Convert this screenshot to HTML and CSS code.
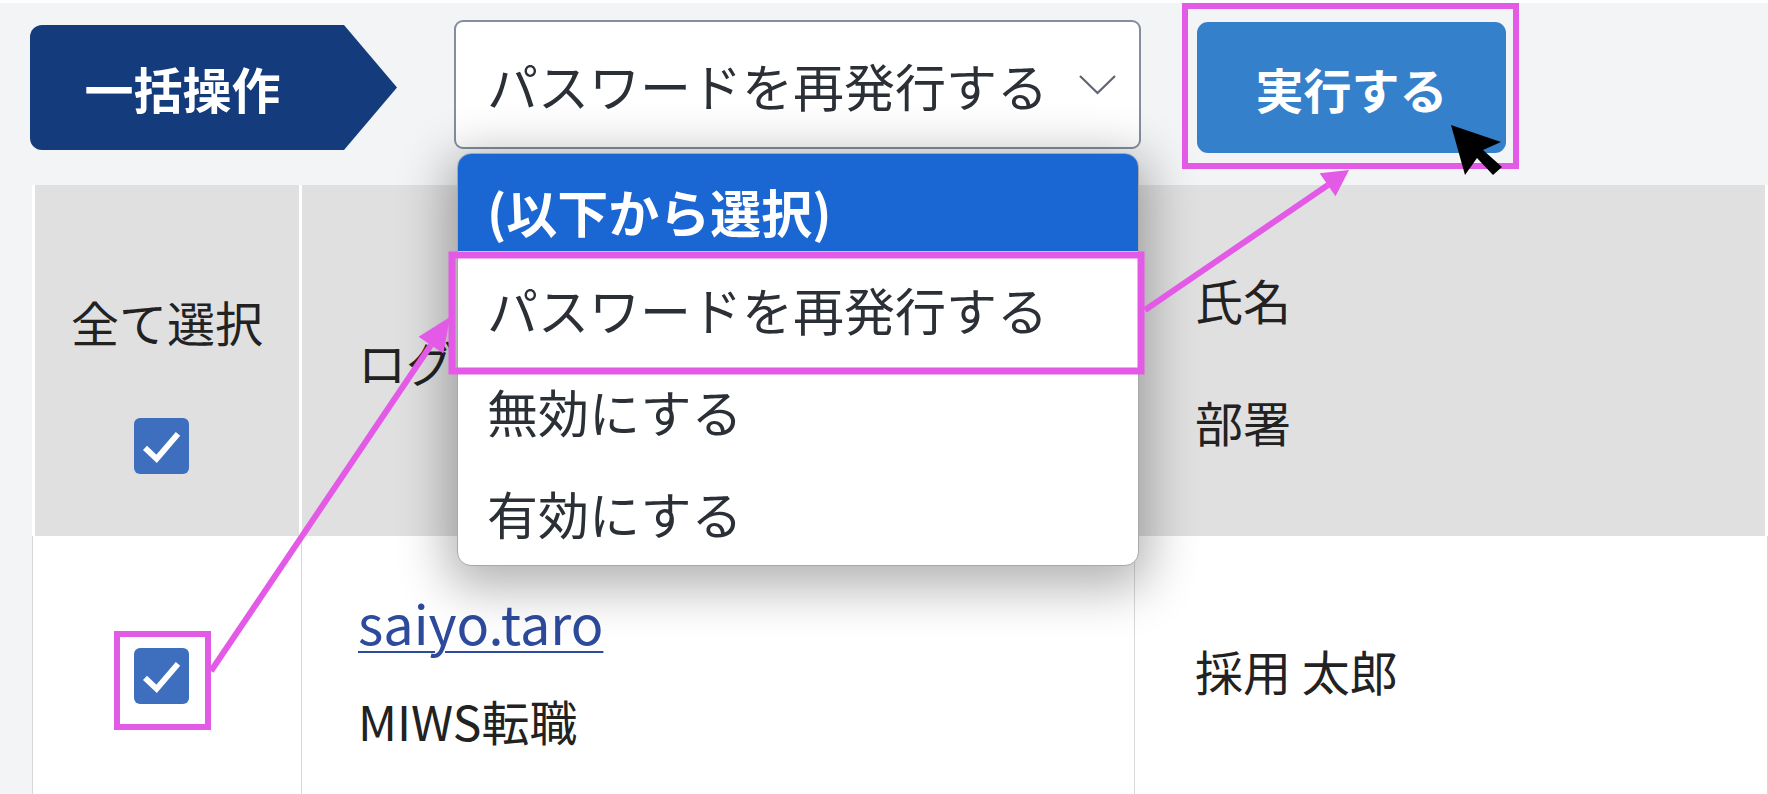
FILE: index.html
```html
<!DOCTYPE html>
<html lang="ja">
<head>
    <meta charset="UTF-8">
    <meta name="viewport" content="width=device-width, initial-scale=1.0">
    <title>ユーザー一括操作</title>
    <link rel="stylesheet" href="styles.css">
</head>
<body>

    <div class="toolbar">
        <div class="bulk-label">一括操作</div>

        <div class="select-wrap">
            <div class="select-box">
                <span class="select-value">パスワードを再発行する</span>
                <svg class="chevron" width="39" height="21" viewBox="0 0 39 21">
                    <polyline points="2,2 19.5,19 37,2" fill="none" stroke="#5d6672" stroke-width="2.2"/>
                </svg>
            </div>

            <!-- opened option list -->
            <ul class="select-menu">
                <li class="placeholder">(以下から選択)</li>
                <li>パスワードを再発行する</li>
                <li>無効にする</li>
                <li class="last">有効にする</li>
            </ul>
        </div>

        <button class="run-btn">実行する</button>
    </div>

    <table class="user-table">
        <colgroup>
            <col class="col-check">
            <col class="col-login">
            <col>
        </colgroup>
        <thead>
            <tr>
                <th class="th-check">
                    <div>全て選択</div>
                    <span class="checkbox header-check">
                        <svg width="55" height="56" viewBox="0 0 18 18"><polyline points="3.6,9.6 7.4,13.2 14.4,5" fill="none" stroke="#fff" stroke-width="1.9"/></svg>
                    </span>
                </th>
                <th class="th-login">ログインID</th>
                <th class="th-name">
                    <div>氏名</div>
                    <div class="sub-head">部署</div>
                </th>
            </tr>
        </thead>
        <tbody>
            <tr>
                <td class="cell-check">
                    <span class="checkbox">
                        <svg width="55" height="56" viewBox="0 0 18 18"><polyline points="3.6,9.6 7.4,13.2 14.4,5" fill="none" stroke="#fff" stroke-width="1.9"/></svg>
                    </span>
                </td>
                <td class="cell-login">
                    <div><a href="#" class="user-link">saiyo.taro</a></div>
                    <div>MIWS転職</div>
                </td>
                <td class="cell-name">採用 太郎</td>
            </tr>
        </tbody>
    </table>

    <!-- annotation overlay -->
    <svg class="annotations" width="1768" height="794" viewBox="0 0 1768 794">
        <g fill="none" stroke="#e35ae6">
            <rect x="1185" y="3" width="331" height="160" stroke-width="6"/>
            <rect x="452" y="252" width="689" height="116" stroke-width="7"/>
            <rect x="117" y="631" width="91" height="93" stroke-width="6"/>
            <line x1="211" y1="668" x2="431" y2="342" stroke-width="6"/>
            <line x1="1145" y1="307" x2="1328" y2="182" stroke-width="6"/>
        </g>
        <g fill="#e35ae6">
            <polygon points="450,314 443.4,350.6 418.6,333.8"/>
            <polygon points="1349,167 1335.5,193.2 1319.7,170.2"/>
        </g>
        <polygon fill="#000" points="1451,122 1501,139 1483,147 1502,164 1493,172 1477,155 1465,172"/>
    </svg>

</body>
</html>
```

FILE: styles.css
```css
/* Page */
* {
    box-sizing: border-box;
}

body {
    margin: 0;
    height: 794px;
    overflow: hidden;
    position: relative;
    background-color: #f3f4f6;
    border-top: 3px solid #fff;
    font-family: "Noto Sans CJK JP", "Noto Sans", sans-serif;
    color: #222;
}

/* Toolbar */
.toolbar {
    display: flex;
    align-items: flex-start;
    padding: 17px 0 0 30px;
}

.bulk-label {
    width: 367px;
    height: 125px;
    margin-top: 5px;
    padding-right: 62px;
    display: flex;
    align-items: center;
    justify-content: center;
    background-color: #143c7c;
    color: #fff;
    font-size: 49px;
    font-weight: 700;
    border-radius: 12px 0 0 12px;
    clip-path: polygon(0 0, 314px 0, 100% 50%, 314px 100%, 0 100%);
}

.select-wrap {
    position: relative;
    margin: 0 56px 0 57px;
}

.select-box {
    width: 687px;
    height: 129px;
    display: flex;
    align-items: center;
    padding: 0 22px 0 31px;
    background-color: #fff;
    border: 2px solid #838f9d;
    border-radius: 9px;
    font-size: 51px;
    color: #2b2f36;
}

.chevron {
    margin-left: auto;
}

.select-menu {
    position: absolute;
    top: calc(100% + 4px);
    left: 3px;
    width: 682px;
    margin: 0;
    padding: 0;
    list-style: none;
    background-color: #fff;
    border: 1px solid #a8a8a8;
    border-radius: 14px;
    overflow: hidden;
    box-shadow: 0 12px 50px 10px rgba(0, 0, 0, 0.3);
    font-size: 51px;
    color: #2b2f36;
    z-index: 2;
}

.select-menu li {
    height: 102px;
    display: flex;
    align-items: center;
    padding: 14px 0 0 29px;
}

.select-menu li.placeholder {
    height: 97px;
    padding-top: 16px;
    background-color: #1a66d2;
    color: #fff;
    font-weight: 700;
}

.select-menu li.last {
    height: 110px;
    padding-bottom: 8px;
}

.run-btn {
    width: 309px;
    height: 131px;
    margin-top: 2px;
    background-color: #3580cb;
    color: #fff;
    border: 0;
    border-radius: 11px;
    font-family: "Noto Sans CJK JP", sans-serif;
    font-size: 48px;
    font-weight: 700;
}

/* Table */
.user-table {
    margin: 32px 0 0 32px;
    width: 1736px;
    table-layout: fixed;
    border-collapse: separate;
    border-spacing: 0;
    font-size: 48px;
}

.col-check {
    width: 270px;
}

.col-login {
    width: 833px;
}

.user-table thead th {
    height: 351px;
    padding: 0;
    background-color: #e0e0e0;
    border-right: 3px solid #fff;
    font-weight: 400;
    text-align: left;
    vertical-align: top;
    line-height: 72px;
}

.user-table thead th.th-check {
    border-left: 3px solid #fff;
    text-align: center;
    padding-top: 100px;
}

.user-table thead th.th-login {
    vertical-align: middle;
    padding-left: 56px;
}

.user-table thead th.th-name {
    padding: 78px 0 0 60px;
}

.sub-head {
    margin-top: 50px;
}

.checkbox {
    display: block;
    width: 55px;
    height: 56px;
    background-color: #3e6fbe;
    border-radius: 6px;
}

.checkbox svg {
    display: block;
}

.header-check {
    margin: 61px 0 0 99px;
}

.user-table tbody td {
    height: 300px;
    padding: 0;
    background-color: #fff;
    border-right: 1px solid #d8d8d8;
    vertical-align: top;
    line-height: 96px;
}

.user-table tbody td:first-child {
    border-left: 1px solid #d8d8d8;
}

.cell-check {
    padding-top: 112px !important;
}

.cell-check .checkbox {
    margin-left: 101px;
}

.cell-login {
    padding: 38px 0 0 56px !important;
}

.user-link {
    font-size: 54px;
    color: #2d4a9c;
    text-decoration: underline;
    text-decoration-thickness: 2px;
    text-underline-offset: 6px;
}

.cell-name {
    padding: 86px 0 0 60px !important;
}

/* Annotations */
.annotations {
    position: absolute;
    top: 0;
    left: 0;
    pointer-events: none;
    z-index: 5;
}
```
